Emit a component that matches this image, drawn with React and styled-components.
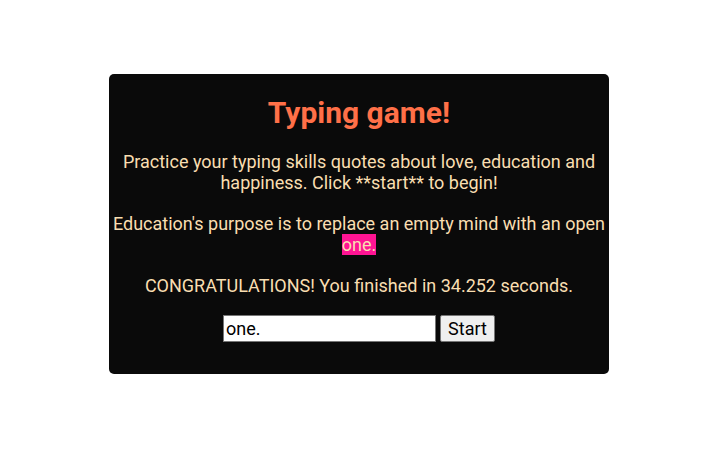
import React, { useState } from "react";
import styled, { createGlobalStyle } from "styled-components";

const GlobalStyle = createGlobalStyle`
  body {
    margin: 0;
    background: #ffffff;
    font-family: Roboto, "Liberation Sans", sans-serif;
  }
`;

const Page = styled.div`
  padding: 74px 0 0 109px;
`;

const Card = styled.div`
  width: 500px;
  height: 300px;
  box-sizing: border-box;
  background: #0a0a0a;
  border-radius: 5px;
  padding: 20px 0 0;
  text-align: center;
  color: #f9deb1;
`;

const Title = styled.h1`
  margin: 0 0 19px;
  font-size: 30px;
  line-height: 38px;
  font-weight: 700;
  color: #ff7048;
`;

const Text = styled.p`
  margin: 0 0 20px;
  font-size: 18px;
  line-height: 21px;
`;

const Highlight = styled.span`
  background: #ff1493;
  color: #f9deb1;
`;

const Controls = styled.div`
  display: flex;
  justify-content: center;
  gap: 4px;
  margin-top: -1px;
`;

const Input = styled.input`
  width: 213px;
  height: 27px;
  box-sizing: border-box;
  font-family: Roboto, "Liberation Sans", sans-serif;
  font-size: 18px;
  padding: 0 2px;
  border: 1px solid #767676;
  background: #fff;
  color: #000;
`;

const Button = styled.button`
  height: 27px;
  box-sizing: border-box;
  font-family: Roboto, "Liberation Sans", sans-serif;
  font-size: 18px;
  padding: 0 7px;
  background: #efefef;
  border: 1px solid #767676;
  border-radius: 2px;
  color: #000;
`;

export default function App() {
  const [value, setValue] = useState("one.");

  return (
    <>
      <GlobalStyle />
      <Page>
        <Card>
          <Title>Typing game!</Title>
          <Text>
            Practice your typing skills quotes about love, education and
            happiness. Click **start** to begin!
          </Text>
          <Text>
            Education's purpose is to replace an empty mind with an open{" "}
            <Highlight>one.</Highlight>
          </Text>
          <Text>CONGRATULATIONS! You finished in 34.252 seconds.</Text>
          <Controls>
            <Input value={value} onChange={e => setValue(e.target.value)} />
            <Button>Start</Button>
          </Controls>
        </Card>
      </Page>
    </>
  );
}
